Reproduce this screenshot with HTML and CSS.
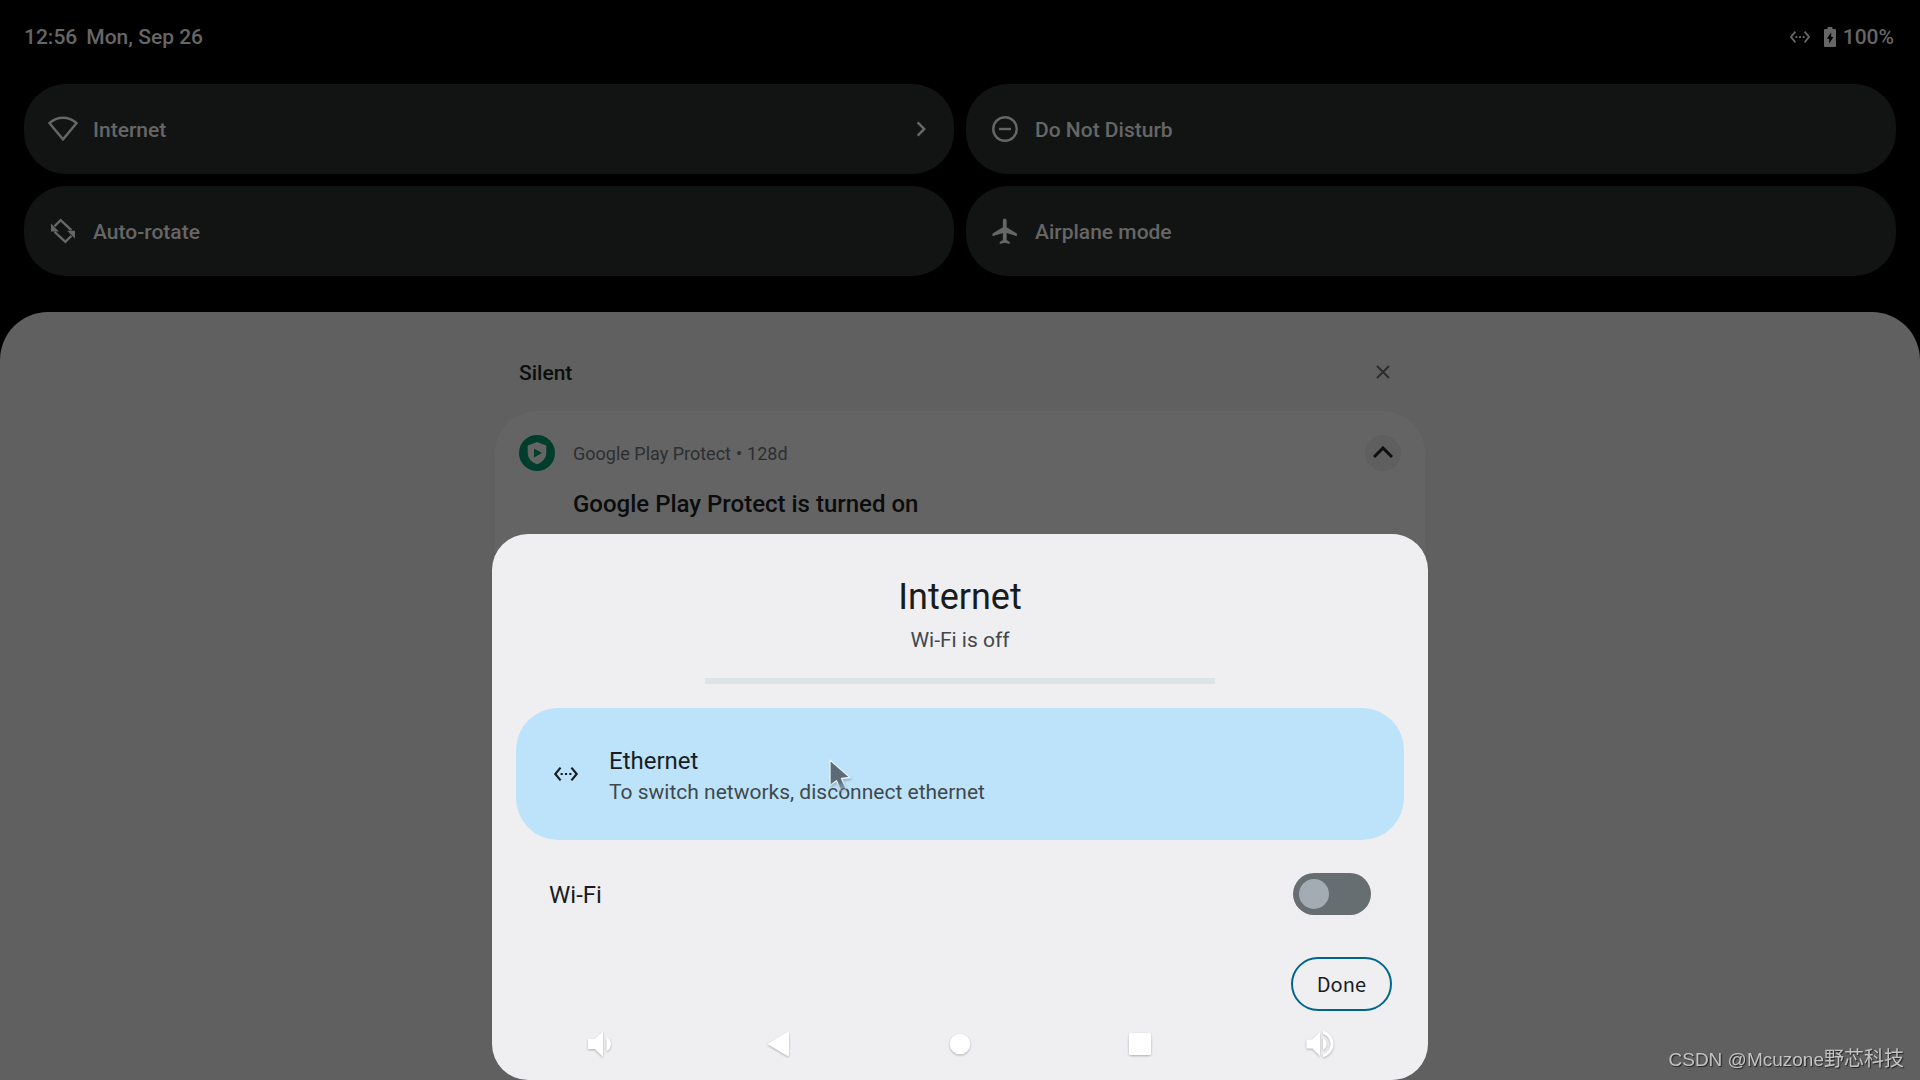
FILE: index.html
```html
<!DOCTYPE html>
<html lang="en">
<head>
<meta charset="utf-8">
<meta name="viewport" content="width=device-width, initial-scale=1">
<title>Quick settings</title>
<link rel="stylesheet" href="styles.css">
</head>
<body>
<svg class="defs" aria-hidden="true">
  <symbol id="ethernet" viewBox="0 0 24 24"><path d="M7.77 6.76L6.23 5.48.82 12l5.41 6.52 1.54-1.28L3.42 12l4.35-5.24zM7 13h2v-2H7v2zm10-2h-2v2h2v-2zm-6 2h2v-2h-2v2zm6.77-7.52l-1.54 1.28L20.58 12l-4.35 5.24 1.54 1.28L23.18 12l-5.41-6.52z"/></symbol>
</svg>
<div class="shade">
  <header class="status">
    <div class="clock"><span>12:56</span><span>Mon, Sep 26</span></div>
    <div class="status-icons">
      <svg class="status-ethernet"><use href="#ethernet"/></svg>
      <svg class="battery" viewBox="0 0 12 20"><path fill-rule="evenodd" d="M3.6 0h4.8v2H11q1 0 1 1v16q0 1-1 1H1q-1 0-1-1V3q0-1 1-1h2.600zM7.200 5.500L2.800 11.800h2.400v4.700l4.200-6.500H7.200z"/></svg>
      <span>100%</span>
    </div>
  </header>
  <section class="tiles">
    <button class="tile" type="button">
      <svg class="icon" viewBox="0 0 24 24"><path class="line" d="M1.100 7.300C7.400 1.500 16.600 1.500 22.900 7.300L12 20.300z"/></svg>
      <span class="tile-label">Internet</span>
      <svg class="icon" viewBox="0 0 24 24"><path d="M10 6L8.590 7.410 13.170 12l-4.580 4.590L10 18l6-6z"/></svg>
    </button>
    <button class="tile" type="button">
      <svg class="icon" viewBox="0 0 24 24"><circle class="line" cx="12" cy="12" r="9.400"/><path class="line" d="M7.200 12h9.600"/></svg>
      <span class="tile-label">Do Not Disturb</span>
    </button>
    <button class="tile" type="button">
      <svg class="icon" viewBox="0 0 24 24"><path class="line" d="M18.700 11.300L10.100 3.300 5.200 8.200M5.300 12.700L13.900 20.700 18.800 15.800"/><path d="M2.400 6v6.300h6.300zM21.600 18v-6.300h-6.300z"/></svg>
      <span class="tile-label">Auto-rotate</span>
    </button>
    <button class="tile" type="button">
      <svg class="icon" viewBox="0 0 24 24"><path d="M21.500 16.200v-2.200L13.300 9V3.600C13.300 2.700 12.600 2 11.800 2s-1.500.7-1.500 1.600V9L2 14v2.200l8.300-2.600v5.500L7.800 20.700V22.400l4-1.100 4 1.100V20.700l-2.500-1.600v-5.500z"/></svg>
      <span class="tile-label">Airplane mode</span>
    </button>
  </section>
  <main class="panel">
    <div class="notifications">
      <div class="section-head">
        <h2 class="section-title">Silent</h2>
        <button class="round" type="button" aria-label="Clear silent notifications"><svg class="close" viewBox="0 0 14 14"><path d="M1 1l12 12M13 1L1 13"/></svg></button>
      </div>
      <article class="card">
        <svg class="app" viewBox="0 0 36 36"><circle cx="18" cy="18" r="18" fill="#003e2b"/><path fill="#646464" d="M18 7l9.300 3.500v7.300c0 5.500-4 9.800-9.300 11.400-5.300-1.600-9.300-5.900-9.300-11.400v-7.300z"/><path fill="#003e2b" d="M15 13.500v9l8-4.500z"/></svg>
        <div class="card-text">
          <p class="card-meta"><span>Google Play Protect</span><span>•</span><span>128d</span></p>
          <h3 class="card-title">Google Play Protect is turned on</h3>
        </div>
        <button class="round expand" type="button" aria-label="Collapse"><svg class="caret" viewBox="0 0 20 14"><path d="M1 11l9-9 9 9"/></svg></button>
      </article>
    </div>
  </main>
</div>

<div class="overlay">
  <section class="dialog" role="dialog" aria-labelledby="dialog-title">
    <h1 class="dialog-title" id="dialog-title">Internet</h1>
    <p class="dialog-sub">Wi-Fi is off</p>
    <div class="divider"></div>
    <button class="network" type="button">
      <svg class="network-icon"><use href="#ethernet"/></svg>
      <span class="network-text">
        <span class="network-name">Ethernet</span>
        <span class="network-note">To switch networks, disconnect ethernet</span>
      </span>
      <svg class="pointer" viewBox="0 0 26 38">
        <defs><linearGradient id="fade" x1="0" y1="0" x2="0" y2="1"><stop offset=".7" stop-color="#5b6c78"/><stop offset="1" stop-color="#5b6c78" stop-opacity=".2"/></linearGradient>
        <linearGradient id="edge" x1="0" y1="0" x2="0" y2="1"><stop offset=".7" stop-color="#e6f3fb"/><stop offset="1" stop-color="#e6f3fb" stop-opacity=".3"/></linearGradient></defs>
        <path fill="url(#fade)" stroke="url(#edge)" stroke-width="1.300" stroke-linejoin="round" d="M2 2v25.500l6.500-4.700L13 33l5-2.200-4.500-10.300 8.500-1z"/>
      </svg>
    </button>
    <label class="wifi">
      <span class="wifi-label">Wi-Fi</span>
      <input class="switch" type="checkbox" role="switch">
    </label>
    <button class="done" type="button">Done</button>
  </section>
</div>

<nav class="navbar">
  <button class="nav" type="button" aria-label="Volume down"><svg class="nav-icon" viewBox="0 0 36 36"><path d="M6 13v10h7l8 8V5l-8 8zM24.500 11.500v13.500q4.500-2 4.500-6.800t-4.500-6.700z"/></svg></button>
  <button class="nav" type="button" aria-label="Back"><svg class="nav-icon" viewBox="0 0 36 36"><path d="M6.600 17.200L25 6.300q2-.8 2 1.200v21q0 2-2 1.200L6.600 18.800q-1-.8 0-1.600z"/></svg></button>
  <button class="nav" type="button" aria-label="Home"><svg class="nav-icon" viewBox="0 0 36 36"><circle cx="18" cy="18" r="10.300"/></svg></button>
  <button class="nav" type="button" aria-label="Recent apps"><svg class="nav-icon" viewBox="0 0 36 36"><rect x="7" y="7" width="22" height="22" rx="1.500"/></svg></button>
  <button class="nav" type="button" aria-label="Volume up"><svg class="nav-icon" viewBox="0 0 36 36"><path d="M4.500 13.500v9h6l7.500 7.500V6l-7.500 7.500zM21 11.900v12.200c2.200-1.100 3.700-3.400 3.700-6.100S23.200 13 21 11.900zM21 4.800v3.100c4.300 1.300 7.500 5.300 7.500 10.100s-3.200 8.800-7.500 10.100v3.100c6-1.400 10.500-6.800 10.500-13.200S27 6.200 21 4.800z"/></svg></button>
</nav>
<p class="watermark">CSDN @Mcuzone<span class="watermark-zh" lang="zh">野芯科技</span></p>
</body>
</html>
```
FILE: styles.css
```css
* { box-sizing: border-box; }
body, h1, h2, h3, p { margin: 0; }
body { background: #000; color: #666; font-family: Roboto, sans-serif; font-size: 21px; line-height: 24px; }
button { border: 0; padding: 0; background: none; color: inherit; font: inherit; }
svg { display: block; flex: none; fill: currentColor; }
.defs { position: absolute; width: 0; height: 0; }

.shade { display: flex; flex-direction: column; min-height: 100vh; }
.status { display: flex; align-items: center; justify-content: space-between; height: 72px; padding: 2px 26px 0 24px; font-weight: 500; }
.clock { display: flex; gap: 9px; }
.status-icons { display: flex; align-items: center; }
.status-ethernet { width: 22px; height: 22px; margin-right: 13px; }
.battery { width: 12px; height: 20px; margin-right: 7px; }

.tiles { display: grid; grid-template-columns: 1fr 1fr; gap: 12px; padding: 12px 24px 36px; }
.tile { display: flex; align-items: center; gap: 15px; height: 90px; padding: 0 18px 0 24px; border-radius: 42px; background: #121413; font-weight: 500; text-align: left; }
.tile-label { flex: 1; padding-top: 1px; }
.icon { width: 30px; height: 30px; }
.line { fill: none; stroke: currentColor; stroke-width: 1.9; }

.panel { flex: 1; padding-top: 42px; border-radius: 48px 48px 0 0; background: #606060; }
.notifications { width: min(930px, 100%); margin: 0 auto; }
.section-head { display: flex; align-items: center; justify-content: space-between; height: 36px; margin: 0 24px 21px; }
.section-title { padding-top: 2px; color: #0c0e0e; font-size: 21px; font-weight: 500; }
.round { display: grid; place-items: center; flex: none; width: 36px; height: 36px; border-radius: 50%; }
.close { width: 14px; height: 14px; fill: none; stroke: #2b2d2e; stroke-width: 2; }
.card { display: flex; align-items: flex-start; gap: 18px; min-height: 180px; padding: 24px; border-radius: 42px; background: #646464; }
.app { width: 36px; height: 36px; }
.card-text { flex: 1; padding-top: 7px; }
.card-meta { display: flex; gap: 5px; color: #2b2f32; font-size: 18px; }
.card-title { margin-top: 24px; color: #0a0c0d; font-size: 24px; font-weight: 500; line-height: 28px; }
.expand { background: #5f5f5f; }
.caret { width: 20px; height: 14px; fill: none; stroke: #0c0e0f; stroke-width: 3; }

.overlay { position: fixed; inset: 0; display: flex; align-items: flex-end; justify-content: center; }
.dialog { display: flex; flex-direction: column; width: min(936px, 100%); padding: 42px 24px 69px; border-radius: 36px; background: #efeff1; color: #191c1d; }
.dialog-title { font-size: 36px; font-weight: 400; line-height: 42px; text-align: center; }
.dialog-sub { margin-top: 10px; color: #40484c; text-align: center; line-height: 24px; }
.divider { align-self: center; width: 510px; max-width: 100%; height: 6px; margin: 26px 0 24px; background: #dce4e8; }
.network { position: relative; display: flex; align-items: center; height: 132px; padding: 0 37px; border-radius: 42px; background: #bde3fa; text-align: left; }
.network-icon { width: 26px; height: 26px; margin-right: 30px; }
.network-text { display: flex; flex-direction: column; gap: 5px; padding-top: 3px; }
.network-name { font-size: 24px; line-height: 28px; }
.network-note { color: #40484c; }
.pointer { position: absolute; left: 312px; top: 50px; width: 26px; height: 38px; filter: drop-shadow(1px 2px 1px #0003); }
.wifi { display: flex; align-items: center; justify-content: space-between; height: 108px; padding: 0 33px; font-size: 24px; line-height: 28px; }
.wifi-label { padding-top: 2px; }
.switch { appearance: none; display: flex; align-items: center; width: 78px; height: 42px; margin: 0; padding: 0 6px; border-radius: 21px; background: #666e71; }
.switch::before { content: ""; width: 30px; height: 30px; border-radius: 50%; background: #a4acb3; }
.switch:checked { justify-content: flex-end; background: #00658d; }
.done { align-self: flex-end; height: 54px; margin: 9px 12px 0; padding: 0 24px; border: 2px solid #00658d; border-radius: 27px; font-family: "Noto Sans CJK SC", sans-serif; font-size: 20px; }

.navbar { position: fixed; inset: auto 0 0; display: flex; justify-content: center; height: 72px; color: #fff; }
.nav { display: grid; place-items: center; width: 180px; }
.nav-icon { width: 36px; height: 36px; filter: drop-shadow(0 1px 1px #0004); }
.watermark { position: fixed; right: 16px; bottom: 8px; color: #c4c4c4; font: 19px/24px "Liberation Sans", sans-serif; text-shadow: 1px 1px 1px #222; }
.watermark-zh { font-family: "Noto Sans CJK SC", sans-serif; font-size: 20px; }
```
